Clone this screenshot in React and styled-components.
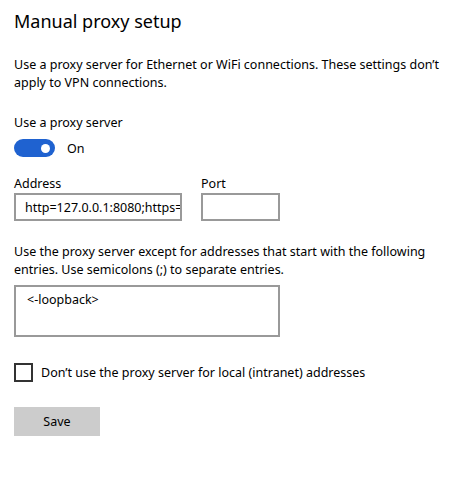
import React, { useState } from "react";
import styled, { createGlobalStyle } from "styled-components";

const GlobalStyle = createGlobalStyle`
  body {
    margin: 0;
    background: #ffffff;
    font-family: "Noto Sans", "Open Sans", sans-serif;
    color: #000000;
  }
`;

const Page = styled.div`
  padding: 8px 14px 0 14px;
  width: 474px;
  height: 493px;
  box-sizing: border-box;
`;

const Title = styled.h1`
  margin: 0;
  font-size: 18px;
  font-weight: 400;
  line-height: 26px;
`;

const Text = styled.p`
  margin: ${(props) => props.margin || "0"};
  font-size: 12.5px;
  line-height: 18px;
`;

const ToggleRow = styled.div`
  display: flex;
  align-items: center;
  gap: 12px;
  margin-top: 7px;
  font-size: 12.5px;
`;

const Track = styled.div`
  width: 41px;
  height: 18px;
  border-radius: 9px;
  background: #1f62d0;
  display: flex;
  align-items: center;
  justify-content: flex-end;
  padding: 0 5px;
  box-sizing: border-box;
`;

const Knob = styled.div`
  width: 9px;
  height: 9px;
  border-radius: 50%;
  background: #ffffff;
`;

const FieldRow = styled.div`
  display: flex;
  gap: 19px;
  margin-top: 18px;
`;

const Field = styled.div`
  display: flex;
  flex-direction: column;
  font-size: 12.5px;
  line-height: 18px;
`;

const Input = styled.div`
  width: ${(props) => props.width}px;
  height: ${(props) => props.height || 28}px;
  margin-top: ${(props) => props.top || 0}px;
  box-sizing: border-box;
  border: 2px solid #999999;
  padding: ${(props) => props.pad || "4px 0 0 9px"};
  font-size: 12.5px;
  line-height: 18px;
  white-space: nowrap;
  overflow: hidden;
`;

const CheckRow = styled.div`
  display: flex;
  align-items: center;
  gap: 8px;
  margin-top: 26px;
  font-size: 12.5px;
`;

const Box = styled.div`
  width: 19px;
  height: 19px;
  box-sizing: border-box;
  border: 2px solid #333333;
`;

const SaveButton = styled.button`
  margin-top: 25px;
  width: 86px;
  height: 29px;
  border: none;
  background: #cccccc;
  font-family: inherit;
  font-size: 12.5px;
  color: #000000;
`;

export default function App() {
  const [on] = useState(true);
  return (
    <Page>
      <GlobalStyle />
      <Title>Manual proxy setup</Title>
      <Text margin="22px 0 0 0">
        Use a proxy server for Ethernet or WiFi connections. These settings don’t apply to VPN connections.
      </Text>
      <Text margin="22px 0 0 0">Use a proxy server</Text>
      <ToggleRow>
        <Track>
          <Knob />
        </Track>
        <span>{on ? "On" : "Off"}</span>
      </ToggleRow>
      <FieldRow>
        <Field>
          Address
          <Input width={168}>http=127.0.0.1:8080;https=127.0.0.1:8080</Input>
        </Field>
        <Field>
          Port
          <Input width={79} />
        </Field>
      </FieldRow>
      <Text margin="22px 0 0 0">
        Use the proxy server except for addresses that start with the following entries. Use semicolons (;) to separate entries.
      </Text>
      <Input width={266} height={52} top={6} pad="4px 0 0 11px">
        &lt;-loopback&gt;
      </Input>
      <CheckRow>
        <Box />
        <span>Don’t use the proxy server for local (intranet) addresses</span>
      </CheckRow>
      <SaveButton>Save</SaveButton>
    </Page>
  );
}
